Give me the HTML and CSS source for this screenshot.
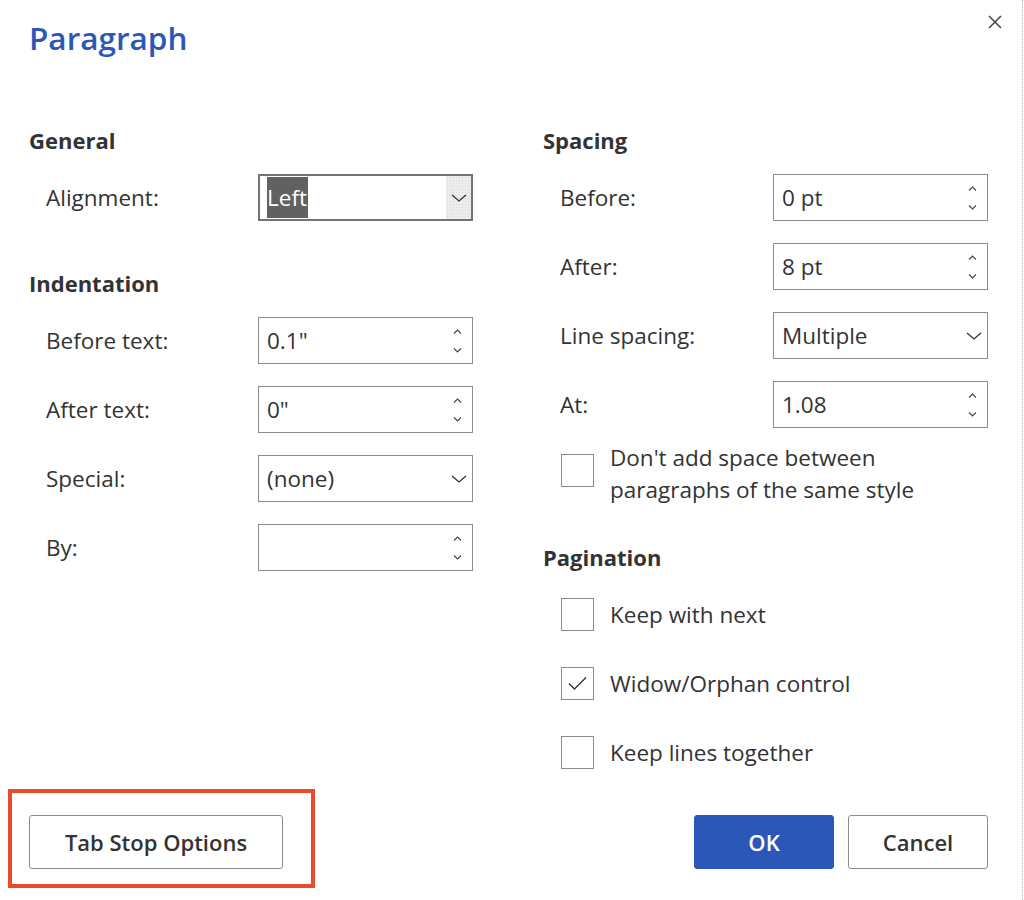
FILE: index.html
```html
<!DOCTYPE html>
<html>
<head>
  <meta charset="UTF-8">
  <title>Paragraph</title>
  <link rel="stylesheet" href="styles.css">
</head>
<body>
  <div class="dialog">
    <header class="dialog-header">
      <h1>Paragraph</h1>
      <button class="close-btn" aria-label="Close">
        <svg width="14" height="14" viewBox="0 0 14 14"><path d="M1 1L13 13M13 1L1 13" stroke="#444" stroke-width="1.5" fill="none"/></svg>
      </button>
    </header>

    <div class="columns">
      <!-- Left column -->
      <section class="col">
        <h2>General</h2>
        <div class="field-row">
          <label>Alignment:</label>
          <div class="box select focused">
            <span class="value"><span class="selected-text">Left</span></span>
            <span class="drop-zone">
              <svg width="16" height="8" viewBox="0 0 16 8"><path d="M1 1L8 7L15 1" stroke="#333" stroke-width="1.3" fill="none"/></svg>
            </span>
          </div>
        </div>

        <h2 class="spaced">Indentation</h2>
        <div class="field-row">
          <label>Before text:</label>
          <div class="box spin">
            <span class="value">0.1"</span>
            <span class="arrows">
              <svg width="9" height="5" viewBox="0 0 9 5"><path d="M1 4.5L4.5 1L8 4.5" stroke="#444" stroke-width="1.1" fill="none"/></svg>
              <svg width="9" height="5" viewBox="0 0 9 5"><path d="M1 0.5L4.5 4L8 0.5" stroke="#444" stroke-width="1.1" fill="none"/></svg>
            </span>
          </div>
        </div>
        <div class="field-row">
          <label>After text:</label>
          <div class="box spin">
            <span class="value">0"</span>
            <span class="arrows">
              <svg width="9" height="5" viewBox="0 0 9 5"><path d="M1 4.5L4.5 1L8 4.5" stroke="#444" stroke-width="1.1" fill="none"/></svg>
              <svg width="9" height="5" viewBox="0 0 9 5"><path d="M1 0.5L4.5 4L8 0.5" stroke="#444" stroke-width="1.1" fill="none"/></svg>
            </span>
          </div>
        </div>
        <div class="field-row">
          <label>Special:</label>
          <div class="box select">
            <span class="value">(none)</span>
            <span class="drop-icon">
              <svg width="16" height="8" viewBox="0 0 16 8"><path d="M1 1L8 7L15 1" stroke="#333" stroke-width="1.3" fill="none"/></svg>
            </span>
          </div>
        </div>
        <div class="field-row">
          <label>By:</label>
          <div class="box spin">
            <span class="value"></span>
            <span class="arrows">
              <svg width="9" height="5" viewBox="0 0 9 5"><path d="M1 4.5L4.5 1L8 4.5" stroke="#444" stroke-width="1.1" fill="none"/></svg>
              <svg width="9" height="5" viewBox="0 0 9 5"><path d="M1 0.5L4.5 4L8 0.5" stroke="#444" stroke-width="1.1" fill="none"/></svg>
            </span>
          </div>
        </div>
      </section>

      <!-- Right column -->
      <section class="col">
        <h2>Spacing</h2>
        <div class="field-row">
          <label>Before:</label>
          <div class="box spin">
            <span class="value">0 pt</span>
            <span class="arrows">
              <svg width="9" height="5" viewBox="0 0 9 5"><path d="M1 4.5L4.5 1L8 4.5" stroke="#444" stroke-width="1.1" fill="none"/></svg>
              <svg width="9" height="5" viewBox="0 0 9 5"><path d="M1 0.5L4.5 4L8 0.5" stroke="#444" stroke-width="1.1" fill="none"/></svg>
            </span>
          </div>
        </div>
        <div class="field-row">
          <label>After:</label>
          <div class="box spin">
            <span class="value">8 pt</span>
            <span class="arrows">
              <svg width="9" height="5" viewBox="0 0 9 5"><path d="M1 4.5L4.5 1L8 4.5" stroke="#444" stroke-width="1.1" fill="none"/></svg>
              <svg width="9" height="5" viewBox="0 0 9 5"><path d="M1 0.5L4.5 4L8 0.5" stroke="#444" stroke-width="1.1" fill="none"/></svg>
            </span>
          </div>
        </div>
        <div class="field-row">
          <label>Line spacing:</label>
          <div class="box select">
            <span class="value">Multiple</span>
            <span class="drop-icon">
              <svg width="16" height="8" viewBox="0 0 16 8"><path d="M1 1L8 7L15 1" stroke="#333" stroke-width="1.3" fill="none"/></svg>
            </span>
          </div>
        </div>
        <div class="field-row">
          <label>At:</label>
          <div class="box spin">
            <span class="value">1.08</span>
            <span class="arrows">
              <svg width="9" height="5" viewBox="0 0 9 5"><path d="M1 4.5L4.5 1L8 4.5" stroke="#444" stroke-width="1.1" fill="none"/></svg>
              <svg width="9" height="5" viewBox="0 0 9 5"><path d="M1 0.5L4.5 4L8 0.5" stroke="#444" stroke-width="1.1" fill="none"/></svg>
            </span>
          </div>
        </div>
        <div class="check-row multi">
          <span class="checkbox"></span>
          <span class="check-label">Don't add space between<br>paragraphs of the same style</span>
        </div>

        <h2 class="spaced-sm">Pagination</h2>
        <div class="check-row">
          <span class="checkbox"></span>
          <span class="check-label">Keep with next</span>
        </div>
        <div class="check-row">
          <span class="checkbox">
            <svg width="31" height="31" viewBox="0 0 31 31"><path d="M7 15.5L12.5 21L24 9.5" stroke="#333" stroke-width="1.4" fill="none"/></svg>
          </span>
          <span class="check-label">Widow/Orphan control</span>
        </div>
        <div class="check-row">
          <span class="checkbox"></span>
          <span class="check-label">Keep lines together</span>
        </div>
      </section>
    </div>

    <footer class="dialog-footer">
      <span class="highlight">
        <button class="btn">Tab Stop Options</button>
      </span>
      <div class="actions">
        <button class="btn btn-primary">OK</button>
        <button class="btn">Cancel</button>
      </div>
    </footer>
  </div>
</body>
</html>
```

FILE: styles.css
```css
:root {
  --blue: #2b58b8;
  --text: #333333;
  --border: #8c8c8c;
  --highlight: #e84b2f;
}

body {
  margin: 0;
  padding: 0;
  background-color: white;
  color: var(--text);
  font-family: 'Open Sans', 'Noto Sans', sans-serif;
}

.dialog {
  width: 1023px;
  height: 900px;
  box-sizing: border-box;
  padding: 0 34px 0 29px;
  border-right: 1px dotted #b5b5b5;
}

.dialog-header {
  display: flex;
  justify-content: space-between;
  align-items: flex-start;
  padding-top: 18px;
}

h1 {
  margin: 0;
  font-size: 31.5px;
  line-height: 40px;
  font-weight: 600;
  color: var(--blue);
}

.close-btn {
  background: none;
  border: none;
  padding: 0;
  margin-top: -3px;
  margin-right: -14px;
  width: 14px;
  height: 14px;
  cursor: pointer;
}

.columns {
  display: grid;
  grid-template-columns: 444px 445px;
  gap: 70px;
  margin-top: 66px;
}

h2 {
  margin: 0 0 18px 0;
  font-size: 22px;
  line-height: 32px;
  font-weight: 700;
}

h2.spaced {
  margin-top: 46px;
}

h2.spaced-sm {
  margin-top: 35px;
}

.field-row {
  display: grid;
  grid-template-columns: 1fr 215px;
  align-items: center;
  height: 47px;
  margin-bottom: 22px;
}

.field-row label {
  padding-left: 17px;
  font-size: 22.5px;
}

.box {
  position: relative;
  display: flex;
  align-items: center;
  height: 47px;
  box-sizing: border-box;
  border: 1px solid var(--border);
  background: white;
  font-size: 22.5px;
}

.box .value {
  flex: 1;
  padding-left: 8px;
  line-height: 32px;
}

.box.focused {
  border: 2px solid #737373;
}

.box.focused .value {
  padding-left: 7px;
  display: flex;
  align-self: stretch;
  align-items: stretch;
  padding-top: 1px;
  padding-bottom: 1px;
}

.selected-text {
  background-color: #616161;
  color: white;
  display: flex;
  align-items: center;
  padding-right: 1px;
}

.drop-zone {
  align-self: stretch;
  width: 25px;
  display: flex;
  align-items: center;
  justify-content: center;
  background-color: #ececec;
  background-image: radial-gradient(#d9d9d9 0.6px, transparent 0.8px);
  background-size: 3px 3px;
}

.drop-icon {
  display: flex;
  align-items: center;
  padding-right: 5px;
}

.arrows {
  display: flex;
  flex-direction: column;
  justify-content: space-between;
  height: 24px;
  padding-right: 10px;
}

.arrows svg {
  display: block;
}

.check-row {
  display: flex;
  align-items: center;
  height: 47px;
  margin-bottom: 22px;
  padding-left: 18px;
}

.check-row.multi {
  align-items: flex-start;
  height: auto;
  margin-top: -8px;
  margin-bottom: 0;
}

.check-row.multi .checkbox {
  margin-top: 12px;
}

.checkbox {
  width: 33px;
  height: 33px;
  box-sizing: border-box;
  border: 1px solid var(--border);
  flex-shrink: 0;
  display: flex;
  align-items: center;
  justify-content: center;
}

.check-label {
  margin-left: 16px;
  font-size: 22.5px;
  line-height: 32px;
}

.dialog-footer {
  display: flex;
  justify-content: space-between;
  align-items: center;
  margin-top: 17px;
}

.highlight {
  position: relative;
  display: inline-block;
}

.highlight::after {
  content: "";
  position: absolute;
  left: -21px;
  top: -26px;
  right: -32px;
  bottom: -19px;
  border: 4px solid var(--highlight);
  pointer-events: none;
}

.btn {
  height: 54px;
  box-sizing: border-box;
  border: 1px solid var(--border);
  border-radius: 3px;
  background: white;
  color: var(--text);
  font-family: inherit;
  font-size: 22px;
  font-weight: 600;
  padding: 0;
  width: 140px;
}

.highlight .btn {
  width: 254px;
}

.actions {
  display: flex;
  gap: 14px;
}

.btn-primary {
  background-color: var(--blue);
  border-color: var(--blue);
  color: white;
}
```
